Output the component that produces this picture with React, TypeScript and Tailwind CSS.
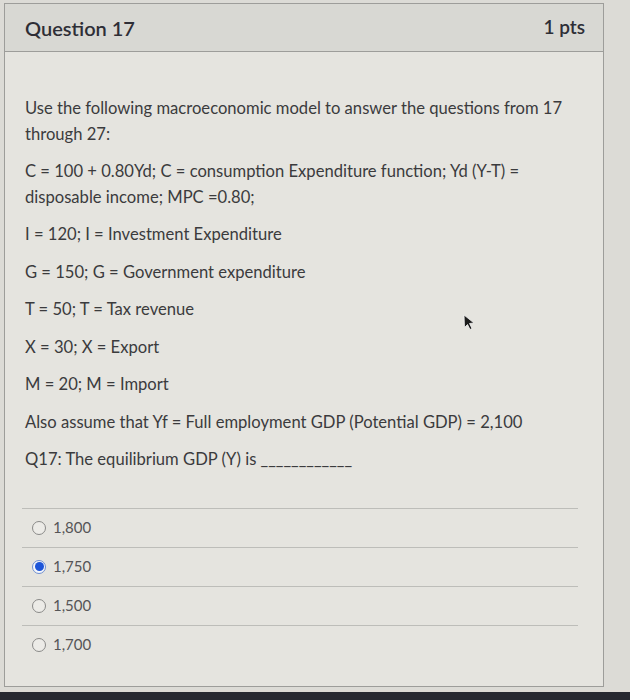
const paragraphs: React.ReactNode[] = [
  "Use the following macroeconomic model to answer the questions from 17 through 27:",
  "C = 100 + 0.80Yd; C = consumption Expenditure function; Yd (Y-T) = disposable income; MPC =0.80;",
  "I = 120; I = Investment Expenditure",
  "G = 150; G = Government expenditure",
  "T = 50; T = Tax revenue",
  "X = 30; X = Export",
  "M = 20; M = Import",
  "Also assume that Yf = Full employment GDP (Potential GDP) = 2,100",
];

const answers = [
  { label: "1,800", checked: false },
  { label: "1,750", checked: true },
  { label: "1,500", checked: false },
  { label: "1,700", checked: false },
];

function Radio({ checked }: { checked: boolean }) {
  if (checked) {
    return (
      <span className="flex h-[14px] w-[14px] items-center justify-center rounded-full border border-[#6f8fd0] bg-[#f4f6fb]">
        <span className="h-[9px] w-[9px] rounded-full bg-[#1d55d8]" />
      </span>
    );
  }
  return <span className="h-[14px] w-[14px] rounded-full border border-[#8a8a88] bg-[#ecebe7]" />;
}

function Cursor() {
  return (
    <svg
      className="absolute left-[462px] top-[314px]"
      width="14"
      height="18"
      viewBox="0 0 14 18"
    >
      <path d="M2 1 L12 9 L7.5 9.5 L10 14.5 L8 15.5 L5.5 10.5 L2.5 13.5 Z" fill="#1c1c1c" stroke="#f2f2f2" strokeWidth="0.8" />
    </svg>
  );
}

export default function App() {
  return (
    <div className="relative flex h-[700px] w-[630px] flex-col overflow-hidden bg-[#dcdbd6] font-['Lato','Liberation_Sans',sans-serif]">
      <div className="pl-[4px] pt-[3px]">
        <div className="flex h-[684px] w-[600px] flex-col border border-[#9d9d9a] bg-[#e5e4df]">
          {/* Header */}
          <div className="flex h-[48px] shrink-0 items-center justify-between border-b border-[#9d9d9a] bg-[#d8d8d3] pl-[20px] pr-[18px]">
            <span className="text-[20px] font-semibold text-[#2e2e36]">Question 17</span>
            <span className="text-[19px] font-semibold text-[#2e2e36]">1 pts</span>
          </div>

          {/* Body */}
          <div className="px-[20px] pt-[44px] text-[16.6px] leading-[25.5px] text-[#3b3b3d]">
            {paragraphs.map((p, i) => (
              <p key={i} className="mb-[12px]">
                {p}
              </p>
            ))}
            <p className="mb-[12px]">
              Q17: The equilibrium GDP (Y) is <span>____________</span>
            </p>

            <div className="ml-[-3px] mt-[35px] w-[556px]">
              {answers.map((a) => (
                <div
                  key={a.label}
                  className="flex h-[39px] items-center gap-[7px] border-t border-[#bdbdb9] pl-[10px] text-[15px] text-[#555557]"
                >
                  <Radio checked={a.checked} />
                  <span>{a.label}</span>
                </div>
              ))}
            </div>
          </div>
        </div>
      </div>
      <div className="flex-1" />
      <div className="h-[8px] bg-[#272931]" />
      <Cursor />
    </div>
  );
}
